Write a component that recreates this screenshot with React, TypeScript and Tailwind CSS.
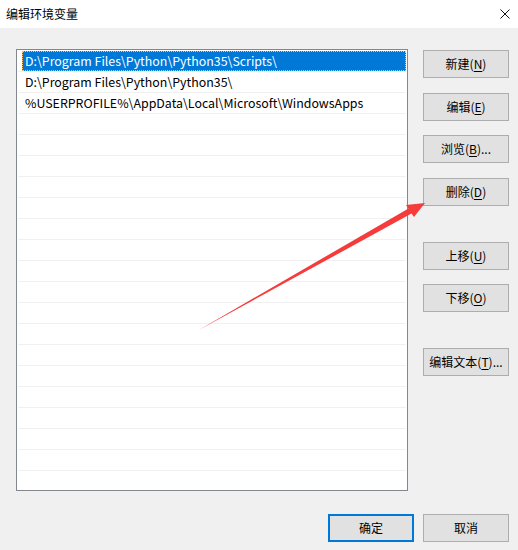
import React from 'react'

const FONT = { fontFamily: '"Noto Sans CJK SC", "Liberation Sans", sans-serif' }

const paths = [
  'D:\\Program Files\\Python\\Python35\\Scripts\\',
  'D:\\Program Files\\Python\\Python35\\',
  '%USERPROFILE%\\AppData\\Local\\Microsoft\\WindowsApps',
]

// label text, hotkey letter, trailing text, top margin
const sideButtons: { pre: string; key: string; post: string; mt: string }[] = [
  { pre: '新建(', key: 'N', post: ')', mt: 'mt-0' },
  { pre: '编辑(', key: 'E', post: ')', mt: 'mt-[15px]' },
  { pre: '浏览(', key: 'B', post: ')...', mt: 'mt-[14px]' },
  { pre: '删除(', key: 'D', post: ')', mt: 'mt-[15px]' },
  { pre: '上移(', key: 'U', post: ')', mt: 'mt-[36px]' },
  { pre: '下移(', key: 'O', post: ')', mt: 'mt-[14px]' },
  { pre: '编辑文本(', key: 'T', post: ')...', mt: 'mt-[36px]' },
]

const WinButton: React.FC<{ className?: string; children: React.ReactNode; primary?: boolean }> = ({
  className = '',
  children,
  primary,
}) => (
  <button
    className={`flex items-center justify-center w-[86px] h-[28px] bg-[#e1e1e1] text-[12px] text-black leading-none ${
      primary ? 'border-2 border-[#0078d7]' : 'border border-[#adadad]'
    } ${className}`}
  >
    {children}
  </button>
)

export default function App() {
  const rows = Array.from({ length: 21 }, (_, i) => paths[i] ?? '')

  return (
    <div className="relative w-[518px] h-[550px] bg-[#f0f0f0] overflow-hidden select-none" style={FONT}>
      {/* title bar */}
      <div className="flex items-center justify-between h-[28px] bg-white pl-[6px] pr-[6px]">
        <span className="text-[12px] text-black">编辑环境变量</span>
        <svg width="12" height="12" viewBox="0 0 12 12" className="mr-[1px]">
          <path d="M1.5 1.5 L10.5 10.5 M10.5 1.5 L1.5 10.5" stroke="#111" strokeWidth="1" fill="none" />
        </svg>
      </div>

      <div className="flex pl-[16px] pt-[21px]">
        {/* list */}
        <div className="w-[392px] h-[442px] border border-[#828790] bg-white pt-[1px] overflow-hidden">
          {rows.map((text, i) => (
            <div key={i} className="h-[21px] border-b border-[#f0f0f0] ml-[1px] mr-[1px]">
              {i === 0 ? (
                <div className="ml-[4px] h-[20px] bg-[#0078d7] border border-dotted border-[#f7c27a] flex items-center pl-[2px] text-[12.4px] text-white whitespace-nowrap">
                  {text}
                </div>
              ) : (
                <div className="ml-[4px] h-[20px] flex items-center pl-[3px] text-[12.4px] text-black whitespace-nowrap">
                  {text}
                </div>
              )}
            </div>
          ))}
        </div>

        {/* side buttons */}
        <div className="flex flex-col ml-[15px] pt-[1px]">
          {sideButtons.map((b) => (
            <WinButton key={b.key} className={b.mt}>
              {b.pre}
              <span className="underline underline-offset-2">{b.key}</span>
              {b.post}
            </WinButton>
          ))}
        </div>
      </div>

      {/* bottom buttons */}
      <div className="flex justify-end gap-[9px] pr-[9px] mt-[23px]">
        <WinButton primary>确定</WinButton>
        <WinButton>取消</WinButton>
      </div>

      {/* annotation arrow */}
      <svg className="absolute left-0 top-0 pointer-events-none" width="518" height="550" viewBox="0 0 518 550">
        <polygon
          points="198,330.5 408.5,208.4 406,205 425,203 414,217 411.5,213.6"
          fill="#f53b3b"
        />
      </svg>
    </div>
  )
}
